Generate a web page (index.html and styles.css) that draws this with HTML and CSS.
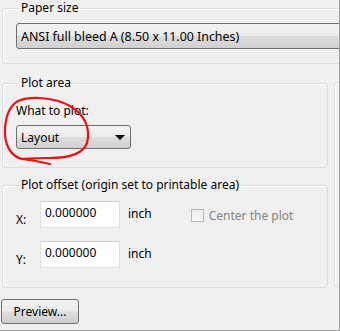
FILE: index.html
```html
<!DOCTYPE html>
<html lang="en">
<head>
    <meta charset="UTF-8">
    <title>Plot settings</title>
    <link rel="stylesheet" href="styles.css">
</head>
<body>
    <div class="frame">
        <fieldset class="group paper">
            <legend>Paper size</legend>
            <div class="combo wide">ANSI full bleed A (8.50 x 11.00 Inches)</div>
        </fieldset>

        <div class="row">
            <div class="col">
                <fieldset class="group area">
                    <legend>Plot area</legend>
                    <div class="label">What to plot:</div>
                    <div class="combo small">
                        <span>Layout</span>
                        <span class="arrow"></span>
                    </div>
                </fieldset>

                <fieldset class="group offset">
                    <legend>Plot offset (origin set to printable area)</legend>
                    <div class="line">
                        <span class="axis">X:</span>
                        <div class="input">0.000000</div>
                        <span class="unit">inch</span>
                        <label class="check"><span class="box"></span>Center the plot</label>
                    </div>
                    <div class="line">
                        <span class="axis">Y:</span>
                        <div class="input">0.000000</div>
                        <span class="unit">inch</span>
                    </div>
                </fieldset>
            </div>
            <div class="side"></div>
        </div>

        <button class="btn">Preview...</button>

        <!-- red marker scribble -->
        <svg class="scribble" width="340" height="331" viewBox="0 0 340 331">
            <path d="M22 159 C10 156 4 144 5 128 C6 115 11 105 18 101 C30 96 54 97 70 106 C84 114 91 128 87 143 C83 154 68 158 50 158 C38 158 28 158 22 159 C32 160 42 162 50 164"
                  fill="none" stroke="#ee1111" stroke-width="2.2" stroke-linecap="round" stroke-linejoin="round"/>
        </svg>
    </div>
</body>
</html>
```

FILE: styles.css
```css
* {
    box-sizing: border-box;
}
html, body {
    margin: 0;
    padding: 0;
    background: #f0f0f0;
}
body {
    font-family: "Noto Sans", "DejaVu Sans", sans-serif;
    font-size: 12px;
    color: #000;
}
.frame {
    position: relative;
    width: 340px;
    height: 331px;
    border-right: 1px solid #a0a0a0;
    border-bottom: 1px solid #a0a0a0;
    overflow: hidden;
    display: flex;
    flex-direction: column;
    align-items: flex-start;
}
.group {
    margin: 0;
    border: 1px solid #d5dfe5;
    border-radius: 3px;
    box-shadow: inset 1px 1px 0 #fff;
    min-width: 0;
}
.group legend {
    padding: 0 2px;
    margin-left: 3px;
    line-height: 14px;
}
.paper {
    margin: 1px 0 0 2px;
    width: 380px;
    padding: 8px 13px 14px 13px;
}
.combo {
    height: 26px;
    border: 1px solid #707070;
    border-radius: 3px;
    background: linear-gradient(#f3f3f3 0%, #ececec 48%, #dddddd 52%, #d0d0d0 100%);
    display: flex;
    align-items: center;
    padding-left: 4px;
}
.combo.wide {
    width: 360px;
    font-size: 12.4px;
}
.combo.small {
    width: 115px;
    height: 24px;
    justify-content: space-between;
    padding-right: 5px;
}
.arrow {
    width: 0;
    height: 0;
    border-left: 5px solid transparent;
    border-right: 5px solid transparent;
    border-top: 5px solid #000;
}
.row {
    display: flex;
    gap: 6px;
    margin-top: 12px;
}
.col {
    display: flex;
    flex-direction: column;
    margin-left: 2px;
}
.area {
    width: 326px;
    padding: 13px 13px 18px 13px;
}
.label {
    line-height: 16px;
    margin-bottom: 6px;
}
.offset {
    width: 326px;
    margin-top: 10px;
    padding: 9px 13px 19px 13px;
}
.line {
    display: flex;
    align-items: flex-start;
    height: 27px;
}
.line + .line {
    margin-top: 13px;
}
.axis {
    width: 24px;
    padding-top: 10px;
}
.input {
    width: 80px;
    height: 27px;
    background: #fff;
    border: 1px solid #dcdfe6;
    border-top-color: #c9ccd3;
    padding: 2px 4px;
    line-height: 18px;
}
.unit {
    margin-left: 8px;
    padding-top: 4px;
    line-height: 18px;
}
.check {
    display: flex;
    align-items: center;
    gap: 5px;
    margin-left: 39px;
    padding-top: 6px;
    color: #838383;
}
.box {
    width: 13px;
    height: 13px;
    border: 1px solid #b7b7b7;
    background: linear-gradient(#ececec, #f8f8f8);
}
.side {
    width: 20px;
    height: 205px;
    margin-top: 6px;
    border: 1px solid #d5dfe5;
    border-right: none;
    border-radius: 3px 0 0 3px;
    box-shadow: inset 1px 1px 0 #fff;
}
.btn {
    margin: 11px 0 0 1px;
    width: 78px;
    height: 25px;
    border: 1px solid #707070;
    border-radius: 3px;
    background: linear-gradient(#f2f2f2 0%, #ebebeb 48%, #dddddd 52%, #cfcfcf 100%);
    font-family: inherit;
    font-size: 12px;
    color: #000;
    padding: 0;
}
.scribble {
    position: absolute;
    left: 0;
    top: 0;
    pointer-events: none;
}
```
